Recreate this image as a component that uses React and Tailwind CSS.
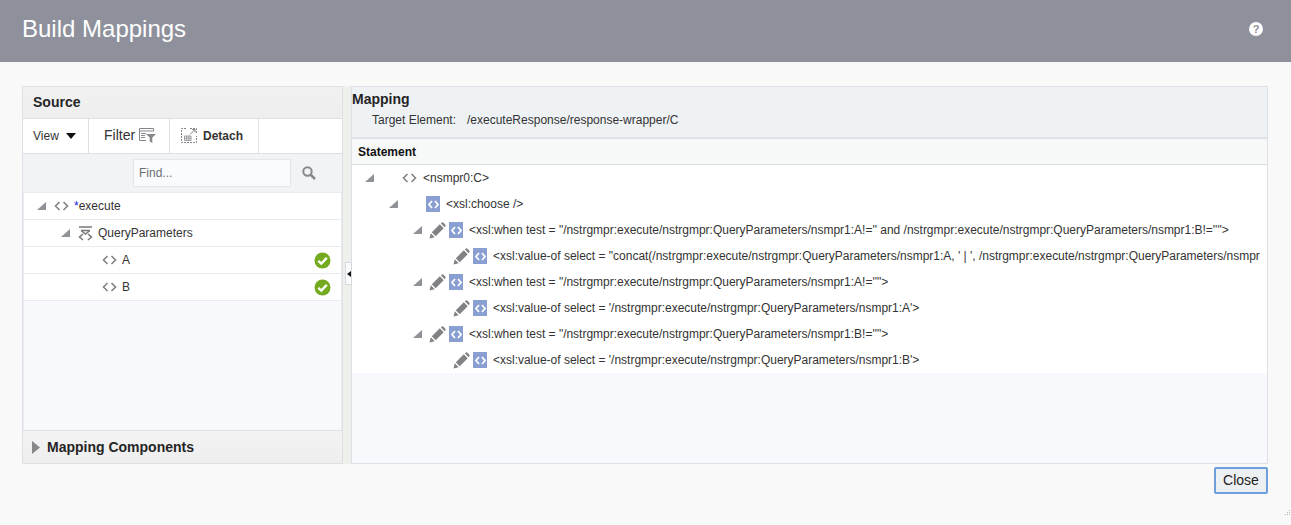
import React from "react";

const FONT = "font-['Liberation_Sans',Arial,sans-serif]";

const Expander = () => (
  <svg width="11" height="10" viewBox="0 0 11 10" className="shrink-0">
    <path d="M10 1 V9 H1 Z" fill="#8f9296" />
  </svg>
);

const Element = () => (
  <svg width="15" height="12" viewBox="0 0 15 12" fill="none" stroke="#808285" strokeWidth="1.6" className="shrink-0">
    <path d="M5.5 2 L1.5 6 L5.5 10 M9.5 2 L13.5 6 L9.5 10" />
  </svg>
);

const XslBox = () => (
  <span className="flex h-[16px] w-[14px] shrink-0 items-center justify-center bg-[#8a9fd1]">
    <svg width="11" height="9" viewBox="0 0 11 9" fill="none" stroke="#fff" strokeWidth="1.7">
      <path d="M4 1 L1 4.5 L4 8 M7 1 L10 4.5 L7 8" />
    </svg>
  </span>
);

const Pencil = () => (
  <svg width="17" height="17" viewBox="0 0 17 17" className="shrink-0">
    <path d="M0.5 16.5 L1.8 11.3 L5.7 15.2 Z M2.8 10.3 L10.8 2.3 L14.7 6.2 L6.7 14.2 Z M11.8 1.3 L13 0.4 Q13.6 0 14.2 0.5 L16.4 2.7 Q16.9 3.3 16.5 3.9 L15.6 5.2 Z" fill="#808285" />
  </svg>
);

const Check = () => (
  <svg width="17" height="17" viewBox="0 0 17 17" className="shrink-0">
    <circle cx="8.5" cy="8.5" r="8" fill="#74aa1f" />
    <path d="M4.3 8.8 L7.3 11.6 L12.8 5.8" fill="none" stroke="#fff" strokeWidth="2.4" />
  </svg>
);

const SourceRow = ({ indent, expander, icon, children, check }) => (
  <div className={`flex h-[27px] items-center border-b border-[#e8ebef] bg-white pr-[10px] ${indent}`}>
    {expander && <span className="mr-[7px]"><Expander /></span>}
    {icon}
    <span className="ml-[5px] flex-1 text-[12px] text-[#333]">{children}</span>
    {check && <Check />}
  </div>
);

const STATEMENTS = [
  { pad: "pl-[12px]", expGap: "mr-[27px]", exp: true, icon: "el", text: "<nsmpr0:C>" },
  { pad: "pl-[36px]", expGap: "mr-[27px]", exp: true, icon: "xsl", text: "<xsl:choose />" },
  { pad: "pl-[60px]", expGap: "mr-[6px]", exp: true, pen: true, icon: "xsl", text: "<xsl:when test = \"/nstrgmpr:execute/nstrgmpr:QueryParameters/nsmpr1:A!='' and /nstrgmpr:execute/nstrgmpr:QueryParameters/nsmpr1:B!=''\">" },
  { pad: "pl-[101px]", pen: true, icon: "xsl", text: "<xsl:value-of select = \"concat(/nstrgmpr:execute/nstrgmpr:QueryParameters/nsmpr1:A, ' | ', /nstrgmpr:execute/nstrgmpr:QueryParameters/nsmpr" },
  { pad: "pl-[60px]", expGap: "mr-[6px]", exp: true, pen: true, icon: "xsl", text: "<xsl:when test = \"/nstrgmpr:execute/nstrgmpr:QueryParameters/nsmpr1:A!=''\">" },
  { pad: "pl-[101px]", pen: true, icon: "xsl", text: "<xsl:value-of select = '/nstrgmpr:execute/nstrgmpr:QueryParameters/nsmpr1:A'>" },
  { pad: "pl-[60px]", expGap: "mr-[6px]", exp: true, pen: true, icon: "xsl", text: "<xsl:when test = \"/nstrgmpr:execute/nstrgmpr:QueryParameters/nsmpr1:B!=''\">" },
  { pad: "pl-[101px]", pen: true, icon: "xsl", text: "<xsl:value-of select = '/nstrgmpr:execute/nstrgmpr:QueryParameters/nsmpr1:B'>" },
];

export default function App() {
  return (
    <div className={`relative flex h-[525px] w-[1291px] flex-col overflow-hidden bg-[#f9f9f9] ${FONT}`}>
      <header className="flex h-[62px] shrink-0 items-center justify-between bg-[#8e909c] pb-[4px] pl-[22px] pr-[28px]">
        <h1 className="text-[24px] leading-none text-white">Build Mappings</h1>
        <span className="flex h-[14px] w-[14px] items-center justify-center rounded-full bg-white text-[11px] font-bold leading-none text-[#8e909c]">?</span>
      </header>

      <div className="mt-[24px] flex h-[378px] pl-[22px] pr-[23px]">
        <section className="flex w-[321px] shrink-0 flex-col border border-[#dde1e6] bg-[#f7f9fd]">
          <div className="flex h-[31px] shrink-0 items-center bg-gradient-to-b from-[#f1f1f1] to-[#eeeeee] pl-[10px] text-[14px] font-bold text-[#252525]">Source</div>
          <div className="flex h-[36px] shrink-0 items-stretch border-y border-[#dde1e6] bg-white text-[#333]">
            <div className="flex w-[66px] items-center gap-[7px] border-r border-[#dde1e6] pb-[1px] pl-[10px] text-[12px]">
              View
              <svg width="10" height="6" viewBox="0 0 10 6"><path d="M0 0 H10 L5 6 Z" fill="#111" /></svg>
            </div>
            <div className="flex w-[81px] items-center gap-[4px] border-r border-[#dde1e6] pb-[1px] pl-[15px] text-[14px]">
              Filter
              <svg width="17" height="15" viewBox="0 0 17 15" fill="none">
                <path d="M0.5 0.5 H14.5 V3 H0.5 Z M0.5 3 V12.5 H7" stroke="#85878a" />
                <path d="M2 5.5 H7 M2 7.5 H6 M2 9.5 H6" stroke="#85878a" />
                <path d="M7 6 H17 L13.3 9.5 V15 L10.7 13.5 V9.5 Z" fill="#85878a" />
              </svg>
            </div>
            <div className="flex w-[89px] items-center gap-[6px] border-r border-[#dde1e6] pb-[1px] pl-[11px] text-[12px] font-bold">
              <svg width="16" height="15" viewBox="0 0 16 15" fill="none" stroke="#85878a">
                <path d="M5 0.5 H0.5 V14.5 H15.5 V8 M15.5 5 V0.5 H8" strokeDasharray="2 1" />
                <path d="M9 6.5 L14 1.5 M11 1.5 H14 V4.5" />
                <path d="M3.5 8 H10 V12.5 H3.5 Z M3.5 10.2 H10 M5.7 8 V12.5 M7.9 8 V12.5" strokeWidth="0.8" />
              </svg>
              Detach
            </div>
          </div>
          <div className="flex h-[39px] shrink-0 items-center border-b border-[#e8ebef] bg-[#f1f3f7] pl-[110px]">
            <div className="flex h-[28px] w-[158px] items-center rounded-[2px] border border-[#e3e6ea] bg-[#fafbfc] pl-[5px] text-[12px] text-[#6b6e72]">Find...</div>
            <svg width="14" height="14" viewBox="0 0 14 14" fill="none" stroke="#85878a" className="ml-[11px]">
              <circle cx="5.5" cy="5.5" r="4.2" strokeWidth="2" />
              <path d="M8.6 8.6 L13 13" strokeWidth="2.6" />
            </svg>
          </div>
          <div className="flex-1 border-x-[1px] border-[#e8ebef]">
            <SourceRow indent="pl-[12px]" expander icon={<Element />}>
              <span className="text-[#2222dd]">*</span>execute
            </SourceRow>
            <SourceRow
              indent="pl-[36px]"
              expander
              icon={
                <svg width="15" height="15" viewBox="0 0 15 15" fill="none" stroke="#77797c" strokeWidth="1.5" className="shrink-0">
                  <path d="M1 1 H14 M3 4.5 H12 M3 4.5 L7.5 8 L12 4.5 M5 8 L1.5 11 L5 14 M10 8 L13.5 11 L10 14" />
                </svg>
              }
            >
              QueryParameters
            </SourceRow>
            <SourceRow indent="pl-[78px]" icon={<Element />} check>A</SourceRow>
            <SourceRow indent="pl-[78px]" icon={<Element />} check>B</SourceRow>
          </div>
          <div className="flex h-[33px] shrink-0 items-center gap-[7px] border-t border-[#dde1e6] bg-gradient-to-b from-[#f3f3f3] to-[#eeeeee] pl-[9px] text-[14px] font-bold text-[#252525]">
            <svg width="8" height="13" viewBox="0 0 8 13"><path d="M0 0 L8 6.5 L0 13 Z" fill="#85878a" /></svg>
            Mapping Components
          </div>
        </section>

        <div className="relative w-[8px] shrink-0 bg-[#eef0ec]">
          <div className="absolute left-[2px] top-[176px] z-10 flex h-[23px] w-[7px] items-center justify-center border border-[#d5dae0] bg-[#fcfcfc]">
            <svg width="4" height="6" viewBox="0 0 4 6"><path d="M4 0 V6 L0 3 Z" fill="#111" /></svg>
          </div>
        </div>

        <section className="flex min-w-0 flex-1 flex-col border border-[#dde1e6] bg-[#f7f9fd]">
          <div className="flex h-[52px] shrink-0 flex-col border-b-[2px] border-[#dde1e6] bg-[#eff2f5]">
            <div className="pt-[4px] text-[14px] font-bold leading-[16px] text-[#252525]">Mapping</div>
            <div className="mt-[6px] flex pl-[20px] text-[12px] leading-[14px] text-[#333]">
              <span className="w-[95px]">Target Element:</span>
              <span>/executeResponse/response-wrapper/C</span>
            </div>
          </div>
          <div className="flex h-[26px] shrink-0 items-center border-b border-[#dde1e6] bg-[#f7f8f8] pl-[6px] text-[12px] font-bold text-[#111]">Statement</div>
          <div className="bg-white">
            {STATEMENTS.map((s, i) => (
              <div key={i} className={`flex h-[26px] items-center whitespace-nowrap ${s.pad}`}>
                {s.exp && <span className={s.expGap}><Expander /></span>}
                {s.pen && <span className="mr-[3px]"><Pencil /></span>}
                {s.icon === "xsl" ? <XslBox /> : <Element />}
                <span className="ml-[6px] text-[12px] tracking-[-0.01px] text-[#333]">{s.text}</span>
              </div>
            ))}
          </div>
        </section>
      </div>

      <div className="flex justify-end pr-[23px] pt-[3px]">
        <button className="h-[27px] w-[54px] rounded-[2px] border-[2px] border-[#6d9fdc] bg-[#edf0f3] text-[14px] text-[#222]">Close</button>
      </div>
      <svg width="8" height="8" viewBox="0 0 8 8" className="absolute left-[1283px] top-[510px]" fill="#b5b5b5">
        <rect x="6" y="0" width="1" height="1" /><rect x="4" y="2" width="1" height="1" /><rect x="6" y="2" width="1" height="1" /><rect x="2" y="4" width="1" height="1" /><rect x="4" y="4" width="1" height="1" /><rect x="6" y="4" width="1" height="1" />
      </svg>
    </div>
  );
}
